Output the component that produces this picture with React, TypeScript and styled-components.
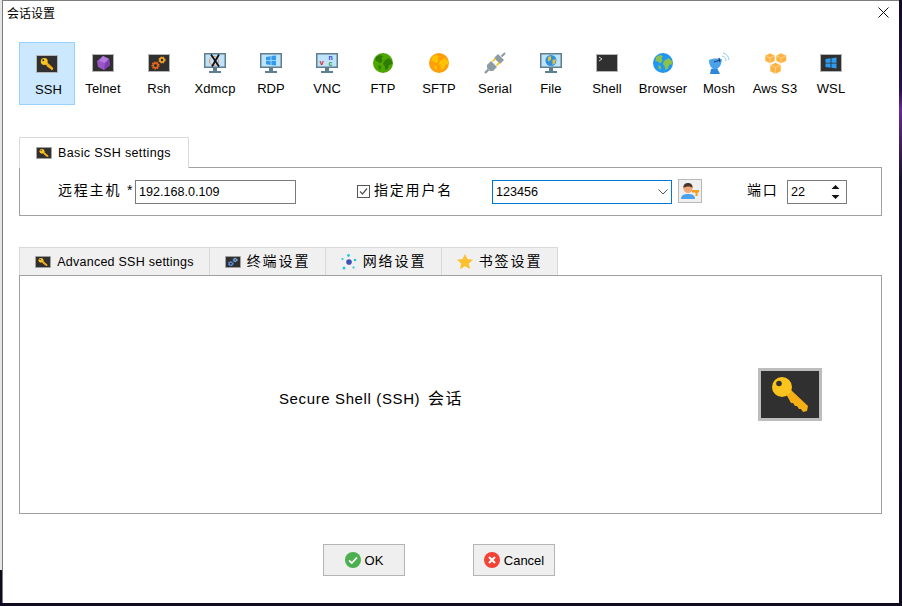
import React from "react";
import styled, { createGlobalStyle } from "styled-components";

const FONT = `"Liberation Sans", Arial, "Noto Sans CJK SC", sans-serif`;

const GlobalStyle = createGlobalStyle`
  html, body {
    margin: 0;
    padding: 0;
    height: 606px;
    overflow: hidden;
  }
  body {
    background-color: #100b20;
    background-image:
      linear-gradient(#e6e6e6, #e6e6e6),
      linear-gradient(#100b20 0, #2a1050 90px, #6a2a90 110px, #1a1030 180px, #100b20 100%);
    background-repeat: no-repeat;
    background-size: 2px 570px, 3px 606px;
    background-position: 0 0, 899px 0;
    font-family: ${FONT};
    color: #000;
  }
`;

const Window = styled.div`
  box-sizing: border-box;
  width: 897px;
  height: 603px;
  margin-left: 2px;
  background: #fff;
  border-top: 1px solid #7c7c7c;
  border-left: 1px solid #7c7c7c;
  display: flex;
  flex-direction: column;
`;

const TitleBar = styled.div`
  box-sizing: border-box;
  height: 24px;
  display: flex;
  align-items: center;
  justify-content: space-between;
  padding: 0 10px 2px 4px;
  font-size: 12px;
`;

const Body = styled.div`
  padding: 17px 0 0 16px;
  width: 863px;
`;

const Toolbar = styled.div`
  display: flex;
`;

const ToolItem = styled.div<{ $selected?: boolean }>`
  box-sizing: border-box;
  width: 56px;
  height: 63px;
  padding-top: ${(p) => (p.$selected ? 11 : 10)}px;
  display: flex;
  flex-direction: column;
  align-items: center;
  font-size: 13px;
  letter-spacing: 0.1px;
  background: ${(p) => (p.$selected ? "#cce8ff" : "transparent")};
  outline: ${(p) => (p.$selected ? "1px solid #99d1ff" : "none")};
  outline-offset: -1px;
`;

const IconSlot = styled.div`
  height: 22px;
  display: flex;
  align-items: center;
  justify-content: center;
`;

const ToolLabel = styled.div<{ $selected?: boolean }>`
  margin-top: 7px;
  margin-left: ${(p) => (p.$selected ? 3 : 0)}px;
  line-height: 16px;
  white-space: nowrap;
`;

const TopTab = styled.div`
  box-sizing: border-box;
  position: relative;
  z-index: 1;
  width: 170px;
  height: 31px;
  margin-top: 32px;
  padding-left: 16px;
  display: flex;
  align-items: center;
  gap: 6px;
  font-size: 12.5px;
  letter-spacing: 0.37px;
  background: #fff;
  border: 1px solid #d9d9d9;
  border-bottom: none;
`;

const HostPanel = styled.div`
  box-sizing: border-box;
  height: 49px;
  margin-top: -1px;
  border: 1px solid #a0a0a0;
  display: flex;
  align-items: center;
  padding: 0 0 0 38px;
  font-size: 14px;
`;

const FieldLabel = styled.span<{ $width: number }>`
  width: ${(p) => p.$width}px;
  margin-bottom: 6px;
  letter-spacing: 1.8px;
  white-space: nowrap;
  flex: none;
`;

const TextInput = styled.div<{ $width: number; $focused?: boolean }>`
  box-sizing: border-box;
  width: ${(p) => p.$width}px;
  height: 24px;
  flex: none;
  display: flex;
  align-items: center;
  justify-content: space-between;
  padding: 0 3px;
  font-size: 12.6px;
  border: 1px solid ${(p) => (p.$focused ? "#0078d7" : "#7a7a7a")};
`;

const CheckField = styled.div`
  margin-left: 61px;
  width: 135px;
  flex: none;
  display: flex;
  align-items: center;
  gap: 4px;
`;

const CheckBox = styled.div`
  box-sizing: border-box;
  width: 13px;
  height: 13px;
  border: 1px solid #555;
  display: flex;
  align-items: center;
  justify-content: center;
`;

const UserButton = styled.div`
  box-sizing: border-box;
  width: 24px;
  height: 24px;
  margin: -2px 45px 0 6px;
  flex: none;
  display: flex;
  align-items: center;
  justify-content: center;
  background: #efefef;
  border: 1px solid #b8b8b8;
`;

const SpinArrows = styled.div`
  display: flex;
  margin-right: 3px;
`;

const TabStrip = styled.div`
  display: flex;
  margin-top: 31px;
`;

const BottomTab = styled.div<{ $width: number; $first?: boolean }>`
  box-sizing: border-box;
  width: ${(p) => p.$width}px;
  height: 28px;
  display: flex;
  align-items: center;
  justify-content: center;
  gap: 6px;
  font-size: 12.5px;
  letter-spacing: 0.25px;
  background: #f0f0f0;
  border: 1px solid #d9d9d9;
  border-bottom: none;
  border-left-width: ${(p) => (p.$first ? 1 : 0)}px;
  white-space: nowrap;
`;

const CjkText = styled.span`
  font-size: 14px;
  letter-spacing: 1.9px;
  margin-bottom: 4px;
`;

const InfoPanel = styled.div`
  box-sizing: border-box;
  height: 239px;
  border: 1px solid #a0a0a0;
  display: flex;
  align-items: center;
  justify-content: space-between;
  padding: 0 59px 0 259px;
`;

const InfoText = styled.div`
  font-size: 15px;
  letter-spacing: 0.62px;
  margin-top: 5px;
`;

const InfoCjk = styled.span`
  font-size: 16px;
  letter-spacing: 1.5px;
  margin-left: 3px;
`;

const ButtonRow = styled.div`
  display: flex;
  gap: 68px;
  margin-top: 30px;
  padding-left: 304px;
`;

const DialogButton = styled.div`
  box-sizing: border-box;
  width: 82px;
  height: 32px;
  display: flex;
  align-items: center;
  justify-content: center;
  gap: 4px;
  font-size: 13px;
  background: #efefef;
  border: 1px solid #b4b4b4;
`;

const KeyShape = () => (
  <>
    <path d="M28 26 33 22 50 38 49 43 45 44 43 41 41 41 39 38 37 38 35 35 33 35Z" fill="#f5ae14" />
    <circle cx="24" cy="19" r="10" fill="#fcc31e" />
    <circle cx="21" cy="15.5" r="2.8" fill="#303030" />
  </>
);

const DarkTile = ({ w = 22, h = 18, children }: { w?: number; h?: number; children?: React.ReactNode }) => (
  <svg width={w} height={h} viewBox="0 0 22 18" preserveAspectRatio="none">
    <rect x="0.5" y="0.5" width="21" height="17" fill="#303030" stroke="#b5b5b5" />
    {children}
  </svg>
);

const KeyTile = ({ w, h }: { w?: number; h?: number }) => (
  <DarkTile w={w} h={h}>
    <g transform="scale(0.344)">
      <KeyShape />
    </g>
  </DarkTile>
);

const Gear = ({ x, y, r, color }: { x: number; y: number; r: number; color: string }) => (
  <g>
    <circle cx={x} cy={y} r={r} fill="none" stroke={color} strokeWidth={r * 0.75} strokeDasharray="1.2 0.9" />
    <circle cx={x} cy={y} r={r * 0.8} fill="none" stroke={color} strokeWidth={r * 0.55} />
  </g>
);

const WindowsMark = ({ x, y, s, color = "#2f9bf0" }: { x: number; y: number; s: number; color?: string }) => (
  <g transform={`translate(${x} ${y}) scale(${s})`} fill={color}>
    <path d="M0 1.4 4.6.7V4.7H0Z" />
    <path d="M5.4.6 10 0V4.7H5.4Z" />
    <path d="M0 5.5H4.6V9.4L0 8.7Z" />
    <path d="M5.4 5.5H10V10L5.4 9.4Z" />
  </g>
);

const Monitor = ({ children }: { children?: React.ReactNode }) => (
  <svg width="22" height="20" viewBox="0 0 22 20">
    <rect x="0" y="0" width="22" height="15" fill="#5f7f8f" />
    <rect x="1.5" y="1.5" width="19" height="12" fill="#bfe3fb" />
    <rect x="9" y="15" width="4" height="3" fill="#5f7f8f" />
    <rect x="5" y="18" width="12" height="2" fill="#5f7f8f" />
    {children}
  </svg>
);

const Globe = ({ sea, land }: { sea: string; land: string }) => (
  <svg width="20" height="20" viewBox="0 0 20 20">
    <circle cx="10" cy="10" r="10" fill={sea} />
    <path d="M3 4 7 2 10 3 8.5 5.5 9.5 8 7 10.5 5 8.5 2.5 8Z" fill={land} />
    <path d="M11 8 15.5 5 18.5 7.5 19.5 11 16 12 15 15.5 12.5 17 11.5 13 10 11Z" fill={land} />
    <path d="M5.5 12 8 13.5 7.5 17 5.5 15.5Z" fill={land} />
  </svg>
);

const ICONS: { label: string; icon: React.ReactNode }[] = [
  { label: "SSH", icon: <KeyTile /> },
  {
    label: "Telnet",
    icon: (
      <DarkTile>
        <path d="M11 2 17 5 18 11 12 16 6 13 5 7Z" fill="#9a55c8" />
        <path d="M11 2 17 5 13 9 7 7Z" fill="#b57ae0" />
        <path d="M13 9 17 5 18 11 12 16Z" fill="#7f3fb0" />
      </DarkTile>
    ),
  },
  {
    label: "Rsh",
    icon: (
      <DarkTile>
        <Gear x={7.5} y={11.5} r={3} color="#e5641b" />
        <Gear x={14} y={6} r={2.6} color="#f2a32a" />
      </DarkTile>
    ),
  },
  {
    label: "Xdmcp",
    icon: (
      <Monitor>
        <circle cx="10" cy="8" r="4.5" fill="none" stroke="#e79a70" strokeWidth="1.2" />
        <path d="M7 1.5 15 13.5M15 1.5 8 13.5" stroke="#111" strokeWidth="1.8" />
      </Monitor>
    ),
  },
  {
    label: "RDP",
    icon: (
      <Monitor>
        <WindowsMark x={6} y={2.5} s={1} />
      </Monitor>
    ),
  },
  {
    label: "VNC",
    icon: (
      <Monitor>
        <text x="3.5" y="12" fontSize="8" fontWeight="700" fill="#d32f2f" fontFamily={FONT}>v</text>
        <text x="12.5" y="7" fontSize="7" fontWeight="700" fill="#2a3fd0" fontFamily={FONT}>n</text>
        <text x="12.5" y="13" fontSize="7" fontWeight="700" fill="#2e9e3a" fontFamily={FONT}>c</text>
      </Monitor>
    ),
  },
  { label: "FTP", icon: <Globe sea="#4ea600" land="#2f7d00" /> },
  { label: "SFTP", icon: <Globe sea="#ff9d0a" land="#ffc400" /> },
  {
    label: "Serial",
    icon: (
      <svg width="22" height="22" viewBox="0 0 22 22">
        <path d="M10 6 14 2 20 8 16 12Z" fill="#8d9ba5" />
        <path d="M17.5 4.5 21 1" stroke="#8d9ba5" strokeWidth="2" />
        <path d="M3 13 7 9 13 15 9 19 6 19 3 16Z" fill="#8d9ba5" />
        <path d="M4.5 17.5 1 21" stroke="#8d9ba5" strokeWidth="2.4" />
        <path d="M8.5 9.5 11.5 6.5M12.5 13.5 15.5 10.5" stroke="#ffc107" strokeWidth="1.6" />
      </svg>
    ),
  },
  {
    label: "File",
    icon: (
      <Monitor>
        <circle cx="11" cy="7.5" r="5.5" fill="#2f8fe0" />
        <path d="M8 4 11 3 11 7 8 8.5ZM12.5 7 16 6 15 10.5 12.5 12Z" fill="#e0c23a" />
      </Monitor>
    ),
  },
  {
    label: "Shell",
    icon: (
      <DarkTile>
        <path d="M3 3 6 5 3 7" fill="none" stroke="#e8e8e8" strokeWidth="0.9" />
      </DarkTile>
    ),
  },
  { label: "Browser", icon: <Globe sea="#2196f3" land="#8bc34a" /> },
  {
    label: "Mosh",
    icon: (
      <svg width="22" height="22" viewBox="0 0 22 22">
        <path d="M3 17 9 16 12 22 2 22Z" fill="#2f88d6" />
        <path d="M1 8C3 6.5 9 6 14 7L13 12C12 16 8 18 5 17C2 15 1 12 1 8Z" fill="#4aa3ea" />
        <path d="M6 10 12 8M11 6 12 10" stroke="#1f3f7a" strokeWidth="1.2" />
        <path d="M14 4A5 5 0 0 1 18 9M15 1A8 8 0 0 1 21 8" fill="none" stroke="#90caf9" strokeWidth="1" />
      </svg>
    ),
  },
  {
    label: "Aws S3",
    icon: (
      <svg width="23" height="21" viewBox="0 0 23 21">
        <g fill="#ffb13d" stroke="#fff" strokeWidth="0.6">
          <path d="M6 0 11 2.5V8L6 10.5 1 8V2.5Z" />
          <path d="M17 0 22.5 2.5V8L17 10.5 12 8V2.5Z" />
          <path d="M11.5 9.5 17 12V18.5L11.5 21 6 18.5V12Z" />
        </g>
        <path d="M1 2.5 6 5 11 2.5M6 5V10M12 2.5 17 5 22.5 2.5M17 5V10M6 12 11.5 14.5 17 12M11.5 14.5V21" fill="none" stroke="#ffe0b0" strokeWidth="0.7" />
      </svg>
    ),
  },
  {
    label: "WSL",
    icon: (
      <DarkTile>
        <WindowsMark x={5.5} y={3.5} s={1.1} />
      </DarkTile>
    ),
  },
];

export default function App() {
  return (
    <>
      <GlobalStyle />
      <Window>
        <TitleBar>
          <span>会话设置</span>
          <svg width="11" height="11" viewBox="0 0 11 11">
            <path d="M.5.5 10.5 10.5M10.5.5.5 10.5" stroke="#111" strokeWidth="1" />
          </svg>
        </TitleBar>
        <Body>
          <Toolbar>
            {ICONS.map((item, i) => (
              <ToolItem key={item.label} $selected={i === 0}>
                <IconSlot>{item.icon}</IconSlot>
                <ToolLabel $selected={i === 0}>{item.label}</ToolLabel>
              </ToolItem>
            ))}
          </Toolbar>

          <TopTab>
            <KeyTile w={16} h={12} />
            <span>Basic SSH settings</span>
          </TopTab>
          <HostPanel>
            <FieldLabel $width={77}>远程主机 *</FieldLabel>
            <TextInput $width={161}>192.168.0.109</TextInput>
            <CheckField>
              <CheckBox>
                <svg width="11" height="11" viewBox="0 0 11 11">
                  <path d="M2 5.5 4.5 8 9 2.5" fill="none" stroke="#555" strokeWidth="1.2" />
                </svg>
              </CheckBox>
              <FieldLabel $width={90}>指定用户名</FieldLabel>
            </CheckField>
            <TextInput $width={180} $focused>
              123456
              <svg width="10" height="6" viewBox="0 0 10 6">
                <path d="M.5.5 5 5 9.5.5" fill="none" stroke="#555" strokeWidth="1" />
              </svg>
            </TextInput>
            <UserButton>
              <svg width="20" height="20" viewBox="0 0 20 20">
                <path d="M1 18C1 14 4 13 8 13S15 14 15 18Z" fill="#4aa3ea" />
                <circle cx="8" cy="7.5" r="4.5" fill="#f0a878" />
                <path d="M3.5 7C3 3 6 2 8 2S13 3 12.5 7C11 5 6 5 3.5 7Z" fill="#4a3428" />
                <path d="M12 9H19V11.5H17.5V15H15.5V11.5H12Z" fill="#f59c1a" />
              </svg>
            </UserButton>
            <FieldLabel $width={40}>端口</FieldLabel>
            <TextInput $width={60}>
              22
              <SpinArrows>
                <svg width="9" height="16" viewBox="0 0 9 16">
                  <path d="M4.5 1 8.5 5H.5ZM4.5 15 .5 11H8.5Z" fill="#111" />
                </svg>
              </SpinArrows>
            </TextInput>
          </HostPanel>

          <TabStrip>
            <BottomTab $width={191} $first>
              <KeyTile w={16} h={12} />
              <span>Advanced SSH settings</span>
            </BottomTab>
            <BottomTab $width={116}>
              <DarkTile w={16} h={12}>
                <Gear x={8} y={11.5} r={2.8} color="#5a8fe0" />
                <Gear x={14} y={6} r={2.4} color="#7fb0f0" />
              </DarkTile>
              <CjkText>终端设置</CjkText>
            </BottomTab>
            <BottomTab $width={116}>
              <svg width="16" height="16" viewBox="0 0 16 16">
                <circle cx="8" cy="8" r="2.8" fill="#3f51b5" />
                <g fill="#26c6da">
                  <circle cx="7.5" cy="1.5" r="1.4" />
                  <circle cx="1.5" cy="5" r="1.1" />
                  <circle cx="14" cy="6" r="1.3" />
                  <circle cx="3" cy="14" r="1.5" />
                  <circle cx="12.5" cy="13.5" r="1.1" />
                </g>
              </svg>
              <CjkText>网络设置</CjkText>
            </BottomTab>
            <BottomTab $width={116}>
              <svg width="16" height="15" viewBox="0 0 16 15">
                <path d="M8 0 10.4 5 16 5.7 11.9 9.5 13 15 8 12.3 3 15 4.1 9.5 0 5.7 5.6 5Z" fill="#fbc02d" />
              </svg>
              <CjkText>书签设置</CjkText>
            </BottomTab>
          </TabStrip>
          <InfoPanel>
            <InfoText>
              Secure Shell (SSH) <InfoCjk>会话</InfoCjk>
            </InfoText>
            <svg width="64" height="53" viewBox="0 0 64 53">
              <rect x="1.5" y="1.5" width="61" height="50" fill="#303030" stroke="#bdbdbd" strokeWidth="3" />
              <KeyShape />
            </svg>
          </InfoPanel>

          <ButtonRow>
            <DialogButton>
              <svg width="16" height="16" viewBox="0 0 16 16">
                <circle cx="8" cy="8" r="8" fill="#4caf50" />
                <path d="M4 8.3 6.8 11 12 5.5" fill="none" stroke="#fff" strokeWidth="1.8" />
              </svg>
              OK
            </DialogButton>
            <DialogButton>
              <svg width="16" height="16" viewBox="0 0 16 16">
                <circle cx="8" cy="8" r="8" fill="#f44336" />
                <path d="M5 5 11 11M11 5 5 11" stroke="#fff" strokeWidth="2" />
              </svg>
              Cancel
            </DialogButton>
          </ButtonRow>
        </Body>
      </Window>
    </>
  );
}
